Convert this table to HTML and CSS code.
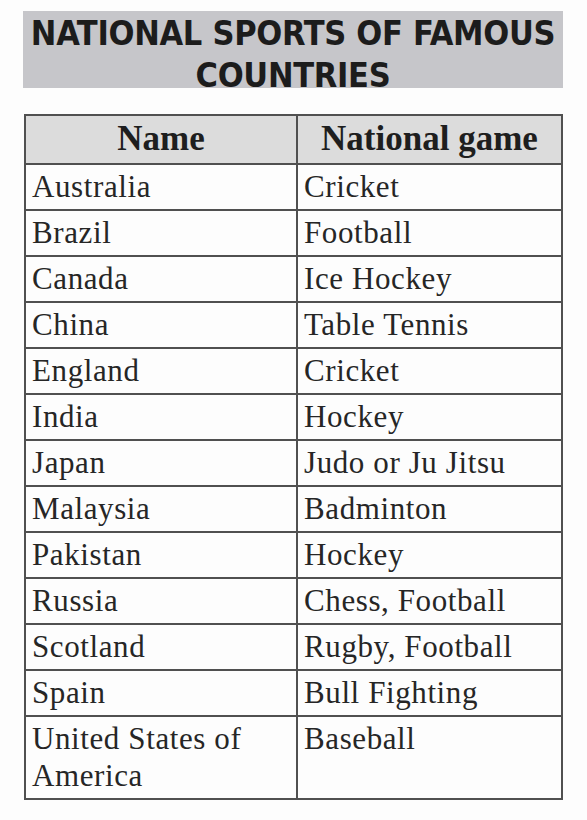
FILE: index.html
```html
<!DOCTYPE html>
<html>
<head>
<meta charset="utf-8">
<link rel="stylesheet" href="styles.css">
</head>
<body>
<div class="page">
  <h1 class="title">NATIONAL SPORTS OF FAMOUS<br>COUNTRIES</h1>
  <table class="sports">
    <thead>
      <tr><th class="c1">Name</th><th class="c2">National game</th></tr>
    </thead>
    <tbody>
      <tr><td>Australia</td><td>Cricket</td></tr>
      <tr><td>Brazil</td><td>Football</td></tr>
      <tr><td>Canada</td><td>Ice Hockey</td></tr>
      <tr><td>China</td><td>Table Tennis</td></tr>
      <tr><td>England</td><td>Cricket</td></tr>
      <tr><td>India</td><td>Hockey</td></tr>
      <tr><td>Japan</td><td>Judo or Ju Jitsu</td></tr>
      <tr><td>Malaysia</td><td>Badminton</td></tr>
      <tr><td>Pakistan</td><td>Hockey</td></tr>
      <tr><td>Russia</td><td>Chess, Football</td></tr>
      <tr><td>Scotland</td><td>Rugby, Football</td></tr>
      <tr><td>Spain</td><td>Bull Fighting</td></tr>
      <tr class="last"><td>United States of<br>America</td><td>Baseball</td></tr>
    </tbody>
  </table>
</div>
</body>
</html>
```
FILE: styles.css
```css
html, body {
  margin: 0;
  padding: 0;
  background: #fdfdfd;
}
.page {
  padding: 11px 0 0 23px;
  width: 540px;
}
.title {
  margin: 0;
  background: #c6c6ca;
  height: 77px;
  box-sizing: border-box;
  padding-top: 1px;
  text-align: center;
  font-family: "DejaVu Sans Condensed", "DejaVu Sans", sans-serif;
  font-stretch: condensed;
  font-weight: bold;
  font-size: 34px;
  line-height: 42px;
  letter-spacing: -0.3px;
  color: #1c1c1c;
}
.sports {
  margin-top: 26px;
  margin-left: 1px;
  width: 539px;
  border-collapse: collapse;
  table-layout: fixed;
  font-family: "Liberation Serif", "Times New Roman", serif;
  color: #262626;
}
.sports th,
.sports td {
  border: 2px solid #505050;
  vertical-align: top;
}
.sports th {
  background: #dcdcdc;
  height: 44px;
  padding: 3px 0 0 0;
  font-size: 35px;
  line-height: 40px;
  font-weight: bold;
  text-align: center;
  color: #1e1e1e;
}
.sports .c1 { width: 270px; }
.sports td {
  height: 41px;
  padding: 3px 4px 0 6px;
  font-size: 31px;
  line-height: 37px;
  letter-spacing: 0.6px;
  text-align: left;
}
.sports tr.last td {
  height: 78px;
}
```
